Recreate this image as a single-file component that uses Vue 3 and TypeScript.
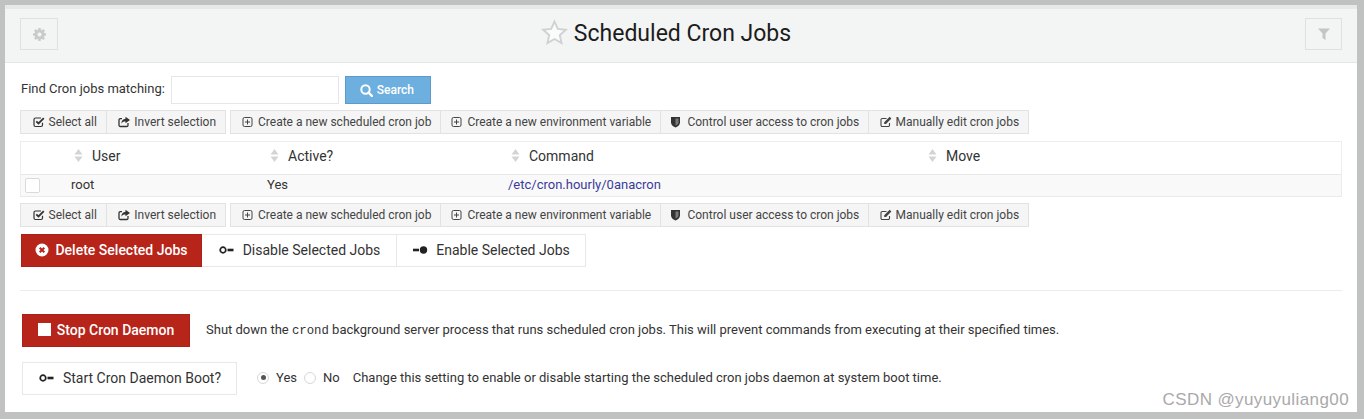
<script setup lang="ts">
const tools = [
  { group: [{ icon: 'check', label: 'Select all' }, { icon: 'share', label: 'Invert selection' }] },
  {
    group: [
      { icon: 'plus', label: 'Create a new scheduled cron job' },
      { icon: 'plus', label: 'Create a new environment variable' },
      { icon: 'shield', label: 'Control user access to cron jobs' },
      { icon: 'edit', label: 'Manually edit cron jobs' },
    ],
  },
]
const columns = ['User', 'Active?', 'Command', 'Move']
const toolbars = [0, 1]
</script>

<template>
  <div class="page">
    <div class="panel">
      <header class="head">
        <button class="head-btn" aria-label="Settings">
          <svg width="13" height="13" viewBox="0 0 14 14"><path fill="#c9cbca" fill-rule="evenodd" d="M5.800 0h2.400l.3 1.900 1 .4L11.100 1.200l1.700 1.700-1.100 1.600.4 1 1.900.3v2.400l-1.900.3-.4 1 1.100 1.600-1.700 1.700-1.600-1.100-1 .4-.3 1.900H5.800l-.3-1.900-1-.4-1.600 1.100-1.700-1.700 1.100-1.600-.4-1L0 8.200V5.800l1.900-.3.4-1-1.100-1.600 1.700-1.700 1.600 1.100 1-.4zM7 4.800a2.200 2.200 0 1 0 0 4.400 2.200 2.200 0 0 0 0-4.400z"/></svg>
        </button>
        <h1 class="title">
          <svg class="star" width="27" height="27" viewBox="0 0 26 26"><path fill="#fafbfb" stroke="#cfd1d2" stroke-width="1.800" d="M13 2.500l3.200 7.100 7.700.8-5.800 5.200 1.700 7.600L13 19.300l-6.800 3.900 1.700-7.600-5.800-5.200 7.700-.8z"/></svg>
          <span>Scheduled Cron Jobs</span>
        </h1>
        <button class="head-btn right" aria-label="Filter">
          <svg width="12" height="12" viewBox="0 0 12 12"><path fill="#c4c6c5" d="M0 .5h12L7.500 5.500V12L4.500 10V5.500z"/></svg>
        </button>
      </header>

      <div class="body">
        <form class="search" @submit.prevent>
          <label class="search-label">Find Cron jobs matching:</label>
          <input class="search-input" type="text" />
          <button class="search-btn">
            <svg width="13" height="13" viewBox="0 0 13 13"><circle cx="5.500" cy="5.500" r="4.200" fill="none" stroke="#fff" stroke-width="2"/><path d="M8.500 8.500l3.300 3.300" stroke="#fff" stroke-width="2.400" stroke-linecap="round"/></svg>
            Search
          </button>
        </form>

        <template v-for="n in toolbars" :key="n">
          <div class="toolbar">
            <div v-for="(t, i) in tools" :key="i" class="tgroup">
              <a v-for="b in t.group" :key="b.label" class="tbtn">
                <svg class="ticon" width="12" height="12" viewBox="0 0 12 12">
                  <template v-if="b.icon === 'check'">
                    <path d="M9.500 6.800v2.200A1.500 1.500 0 0 1 8 10.500H2.500A1.500 1.500 0 0 1 1 9V3.500A1.500 1.500 0 0 1 2.500 2H8" fill="none" stroke="#333" stroke-width="1.200"/>
                    <path d="M3.300 5.300l2.200 2.200L10.800 2.200" fill="none" stroke="#333" stroke-width="1.800"/>
                  </template>
                  <template v-else-if="b.icon === 'share'">
                    <path d="M10 7v2.200A1.300 1.300 0 0 1 8.700 10.500H2.300A1.300 1.300 0 0 1 1 9.200V4A1.300 1.300 0 0 1 2.300 2.700H4" fill="none" stroke="#333" stroke-width="1.300"/>
                    <path d="M7.500 0.800L12 4 7.500 7.200V5.400C5.500 5.400 4 6 3.400 7.800 3.200 4.800 5 2.800 7.500 2.700z" fill="#333"/>
                  </template>
                  <template v-else-if="b.icon === 'plus'">
                    <rect x="1" y="1.500" width="9" height="9" rx="1.500" fill="none" stroke="#444" stroke-width="1"/>
                    <path d="M3 6h5M5.500 3.500v5" stroke="#444" stroke-width="1"/>
                  </template>
                  <template v-else-if="b.icon === 'shield'">
                    <path d="M0 1h9v5.500C9 9 6.500 10.800 4.500 11.500 2.500 10.800 0 9 0 6.500z" fill="#333"/>
                    <path d="M4.500 2.500h3v4c0 1.300-1.500 2.500-3 3.200z" fill="#fff" opacity=".35"/>
                  </template>
                  <template v-else>
                    <path d="M9.500 7v2.200A1.300 1.300 0 0 1 8.200 10.500H2.300A1.300 1.300 0 0 1 1 9.200V3.800A1.300 1.300 0 0 1 2.300 2.500H6.500" fill="none" stroke="#444" stroke-width="1.100"/>
                    <path d="M4.200 6.200L9.700 .8l1.700 1.700L6 8H4.200z" fill="#444"/>
                  </template>
                </svg>
                {{ b.label }}
              </a>
            </div>
          </div>

          <div v-if="n === 0" class="table">
            <div class="thead">
              <div class="cell-check"></div>
              <div v-for="c in columns" :key="c" class="th">
                <svg class="sort" width="9" height="15" viewBox="0 0 9 15"><path fill="#d3d5d5" d="M4.500 1L8.500 6.500H.5zM4.500 14L.5 8.500h8z"/></svg>
                {{ c }}
              </div>
            </div>
            <div class="trow">
              <div class="cell-check"><span class="box"></span></div>
              <div class="td">root</div>
              <div class="td">Yes</div>
              <div class="td"><a class="cmd">/etc/cron.hourly/0anacron</a></div>
              <div class="td"></div>
            </div>
          </div>
        </template>

        <div class="bulk">
          <button class="big danger">
            <svg width="14" height="14" viewBox="0 0 14 14"><circle cx="7" cy="7" r="6.500" fill="#fff"/><path d="M4.700 4.700l4.600 4.600M9.300 4.700L4.700 9.300" stroke="#b7241a" stroke-width="2"/></svg>
            Delete Selected Jobs
          </button>
          <button class="big plain">
            <svg width="16" height="8" viewBox="0 0 16 8"><circle cx="4" cy="4" r="2.800" fill="none" stroke="#222" stroke-width="1.700"/><path d="M8.500 4h6" stroke="#222" stroke-width="2.600"/></svg>
            Disable Selected Jobs
          </button>
          <button class="big plain">
            <svg width="16" height="8" viewBox="0 0 16 8"><path d="M1 4h6" stroke="#222" stroke-width="2.600"/><circle cx="11.500" cy="4" r="3.700" fill="#222"/></svg>
            Enable Selected Jobs
          </button>
        </div>

        <hr class="rule" />

        <div class="action stop">
          <button class="big danger stop-btn">
            <span class="square"></span>
            Stop Cron Daemon
          </button>
          <p class="desc">Shut down the <code>crond</code> background server process that runs scheduled cron jobs. This will prevent commands from executing at their specified times.</p>
        </div>

        <div class="action boot">
          <button class="big plain boot-btn">
            <svg width="16" height="8" viewBox="0 0 16 8"><circle cx="4" cy="4" r="2.800" fill="none" stroke="#222" stroke-width="1.700"/><path d="M8.500 4h6" stroke="#222" stroke-width="2.600"/></svg>
            Start Cron Daemon Boot?
          </button>
          <div class="radios">
            <span class="radio on"></span><span class="rlabel">Yes</span>
            <span class="radio"></span><span class="rlabel">No</span>
          </div>
          <p class="desc">Change this setting to enable or disable starting the scheduled cron jobs daemon at system boot time.</p>
        </div>
      </div>
    </div>
    <div class="mark">CSDN @yuyuyuliang00</div>
  </div>
</template>

<style>
html, body { margin: 0; background: #c0c2c1; }
</style>

<style scoped>
.page {
  position: relative;
  width: 1364px;
  height: 419px;
  padding: 5px 7px 7px 5px;
  box-sizing: border-box;
  background: #c0c2c1;
  font-family: Roboto, "Liberation Sans", sans-serif;
  font-size: 13px;
  color: #333;
  overflow: hidden;
}
.panel { height: 407px; background: #fff; }
.head {
  height: 58px;
  box-sizing: border-box;
  margin: 0;
  border-top: 4px solid #e7e9e8;
  border-bottom: 1px solid #e4e6e5;
  background: #f3f5f4;
  display: flex;
  justify-content: space-between;
  padding: 9px 15px 0;
  position: relative;
}
.head-btn {
  width: 38px;
  height: 32px;
  padding: 0;
  background: transparent;
  border: 1px solid #dfe1e0;
  display: flex;
  align-items: center;
  justify-content: center;
}
.head-btn.right { width: 37px; }
.title {
  position: absolute;
  left: 0;
  right: 30px;
  top: 4px;
  margin: 0;
  height: 40px;
  display: flex;
  align-items: center;
  justify-content: center;
  gap: 6px;
  font-size: 23px;
  font-weight: 400;
  color: #1c1c1c;
}
.star { margin-top: -2px; }
.body { padding: 0 15px; }
.search { display: flex; align-items: center; height: 28px; margin-top: 13px; }
.search-label { color: #333; padding-bottom: 3px; margin-left: 1px; }
.search-input {
  width: 168px;
  height: 28px;
  box-sizing: border-box;
  margin-left: 6px;
  border: 1px solid #e6e6e6;
  background: #fff;
}
.search-btn {
  width: 86px;
  height: 28px;
  margin-left: 6px;
  padding: 0 2px 0 0;
  border: 1px solid #5c9bcb;
  background: #6dafdf;
  color: #fff;
  font: 500 12px Roboto, sans-serif;
  display: flex;
  align-items: center;
  justify-content: center;
  gap: 4px;
}
.toolbar { display: flex; gap: 4px; height: 24px; margin-top: 6px; }
.tgroup { display: flex; }
.tbtn {
  display: flex;
  align-items: center;
  gap: 4px;
  height: 24px;
  box-sizing: border-box;
  padding: 0 8.750px 0 10.500px;
  background: #f5f5f5;
  border: 1px solid #e2e2e2;
  margin-left: -1px;
  font-size: 12px;
  color: #444;
  white-space: nowrap;
}
.tgroup .tbtn:first-child { margin-left: 0; padding: 0 8.500px 0 11px; }
.tgroup:first-child .tbtn { padding: 0 9px 0 11.500px; }
.ticon { flex: none; }
.table {
  margin-top: 7px;
  border: 1px solid #eceeed;
  border-bottom: 1px solid #e8eae9;
  width: 1322px;
  height: 56px;
  box-sizing: border-box;
}
.thead, .trow { display: grid; grid-template-columns: 50px 196px 241px 417px 1fr; }
.thead {
  height: 33px;
  box-sizing: border-box;
  padding-bottom: 5px;
  align-items: center;
  border-bottom: 1px solid #e6e8e7;
  font-size: 14px;
  color: #333;
}
.th { display: flex; align-items: center; gap: 9px; padding-left: 3px; }
.trow { height: 21px; box-sizing: border-box; padding-bottom: 2px; align-items: center; background: #f8f9f8; }
.td { font-size: 13px; color: #333; }
.cmd { color: #3b3b9b; }
.cell-check { padding-left: 4px; display: flex; align-items: center; }
.box {
  width: 15px;
  height: 15px;
  box-sizing: border-box;
  margin-top: 2px;
  background: #fff;
  border: 1px solid #d9dbda;
  border-radius: 2px;
}
.bulk { display: flex; margin-top: 7px; margin-left: 1px; height: 33px; }
.big {
  height: 33px;
  box-sizing: border-box;
  padding: 0 0 2px;
  font: 400 14px Roboto, sans-serif;
  display: flex;
  align-items: center;
  justify-content: center;
  gap: 5px;
  white-space: nowrap;
}
.danger { background: #b7241a; color: #fff; border: 1px solid #a92117; width: 181px; font-weight: 500; gap: 6px; }
.plain { background: #fff; color: #333; border: 1px solid #e8e8e8; border-left: 0; width: 195px; gap: 8px; padding-left: 1px; }
.bulk .plain + .plain { width: 189px; padding-left: 0; }
.rule { margin: 23px 0 0; border: 0; border-top: 1px solid #ececec; width: 1322px; }
.action { display: flex; align-items: center; margin-left: 2px; }
.stop { margin-top: 23px; height: 33px; }
.boot { margin-top: 15px; height: 33px; }
.stop-btn { width: 168px; gap: 6px; }
.square { width: 13px; height: 13px; background: #fff; }
.boot-btn { width: 215px; border-left: 1px solid #e8e8e8; padding-left: 1px; }
.desc { margin: 0 0 2px; color: #333; font-size: 13px; white-space: nowrap; }
.stop .desc { margin-left: 16px; }
code { font-family: "Liberation Mono", monospace; font-size: 12.300px; }
.radios { display: flex; align-items: center; margin-left: 20px; margin-right: 6px; padding-bottom: 2px; }
.radio {
  width: 12px;
  height: 12px;
  box-sizing: border-box;
  border-radius: 50%;
  border: 1px solid #d6d8d7;
  background: #fff;
  position: relative;
}
.radio.on::after {
  content: "";
  position: absolute;
  left: 2.500px;
  top: 2.500px;
  width: 5px;
  height: 5px;
  border-radius: 50%;
  background: #555;
}
.rlabel { margin: 0 7px; color: #333; }
.mark {
  position: absolute;
  right: 15px;
  top: 390px;
  font: 17px "Liberation Sans", sans-serif;
  color: #a9a9a9;
  letter-spacing: 0.400px;
}
</style>
